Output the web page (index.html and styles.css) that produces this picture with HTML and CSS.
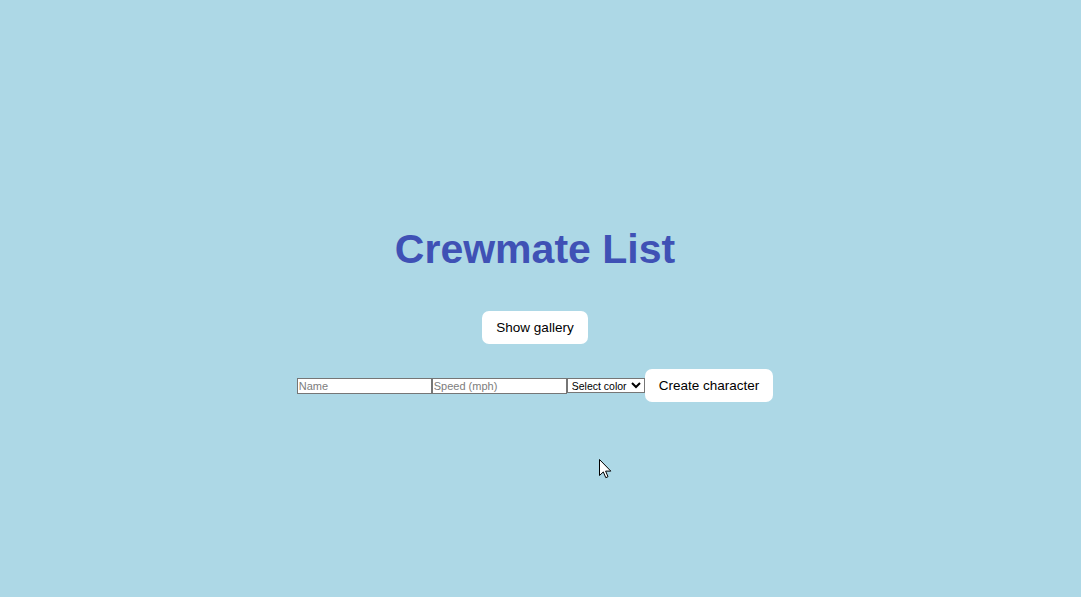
FILE: index.html
```html
<!DOCTYPE html>
<html lang="en">
<head>
    <meta charset="UTF-8">
    <meta name="viewport" content="width=device-width, initial-scale=1.0">
    <title>Crewmate List</title>
    <link rel="stylesheet" href="styles.css">
</head>
<body>
    <div id="app">
        <h1 class="title">Crewmate List</h1>
        <button class="btn">Show gallery</button>
        <form class="create-form">
            <input class="field" type="text" placeholder="Name">
            <input class="field" type="text" placeholder="Speed (mph)">
            <select class="color-select">
                <option>Select color</option>
                <option>Red</option>
                <option>Blue</option>
                <option>Green</option>
            </select>
            <button class="btn" type="button">Create character</button>
        </form>
    </div>
    <!-- mouse pointer in the screenshot -->
    <svg class="pointer" width="13" height="20" viewBox="0 0 13 20">
        <path d="M0.5 0.5 L0.5 16.5 L4.3 12.9 L6.8 18.7 L9 17.7 L6.6 12.1 L11.8 12.1 Z" fill="#fff" stroke="#000" stroke-width="1" stroke-linejoin="miter"/>
    </svg>
</body>
</html>
```

FILE: styles.css
```css
* {
    margin: 0;
    padding: 0;
    box-sizing: border-box;
}

body {
    background-color: lightblue;
    font-family: "Liberation Sans", Arial, sans-serif;
    min-height: 597px;
    padding-right: 11px;
}

#app {
    display: flex;
    flex-direction: column;
    align-items: center;
    padding-top: 226px;
}

.title {
    font-size: 41px;
    line-height: 47px;
    font-weight: bold;
    color: #3f51b5;
}

.btn {
    background-color: #fff;
    border: none;
    border-radius: 7px;
    height: 33px;
    padding: 0 14px;
    font-family: "Liberation Sans", Arial, sans-serif;
    font-size: 13.5px;
    color: #000;
    cursor: pointer;
}

#app > .btn {
    margin-top: 38px;
}

.create-form {
    display: flex;
    align-items: center;
    margin-top: 25px;
}

.field {
    width: 135px;
    height: 16px;
    border: 1px solid #767676;
    background-color: #fff;
    font-family: "Liberation Sans", Arial, sans-serif;
    font-size: 11px;
    padding: 0 1px;
}

.field::placeholder {
    color: #7d7d7d;
}

.color-select {
    width: 78px;
    height: 15px;
    border: 1px solid #767676;
    background-color: #fff;
    font-family: "Liberation Sans", Arial, sans-serif;
    font-size: 10.5px;
    color: #000;
    padding: 0;
}

.pointer {
    position: absolute;
    left: 599px;
    top: 459px;
}
```
